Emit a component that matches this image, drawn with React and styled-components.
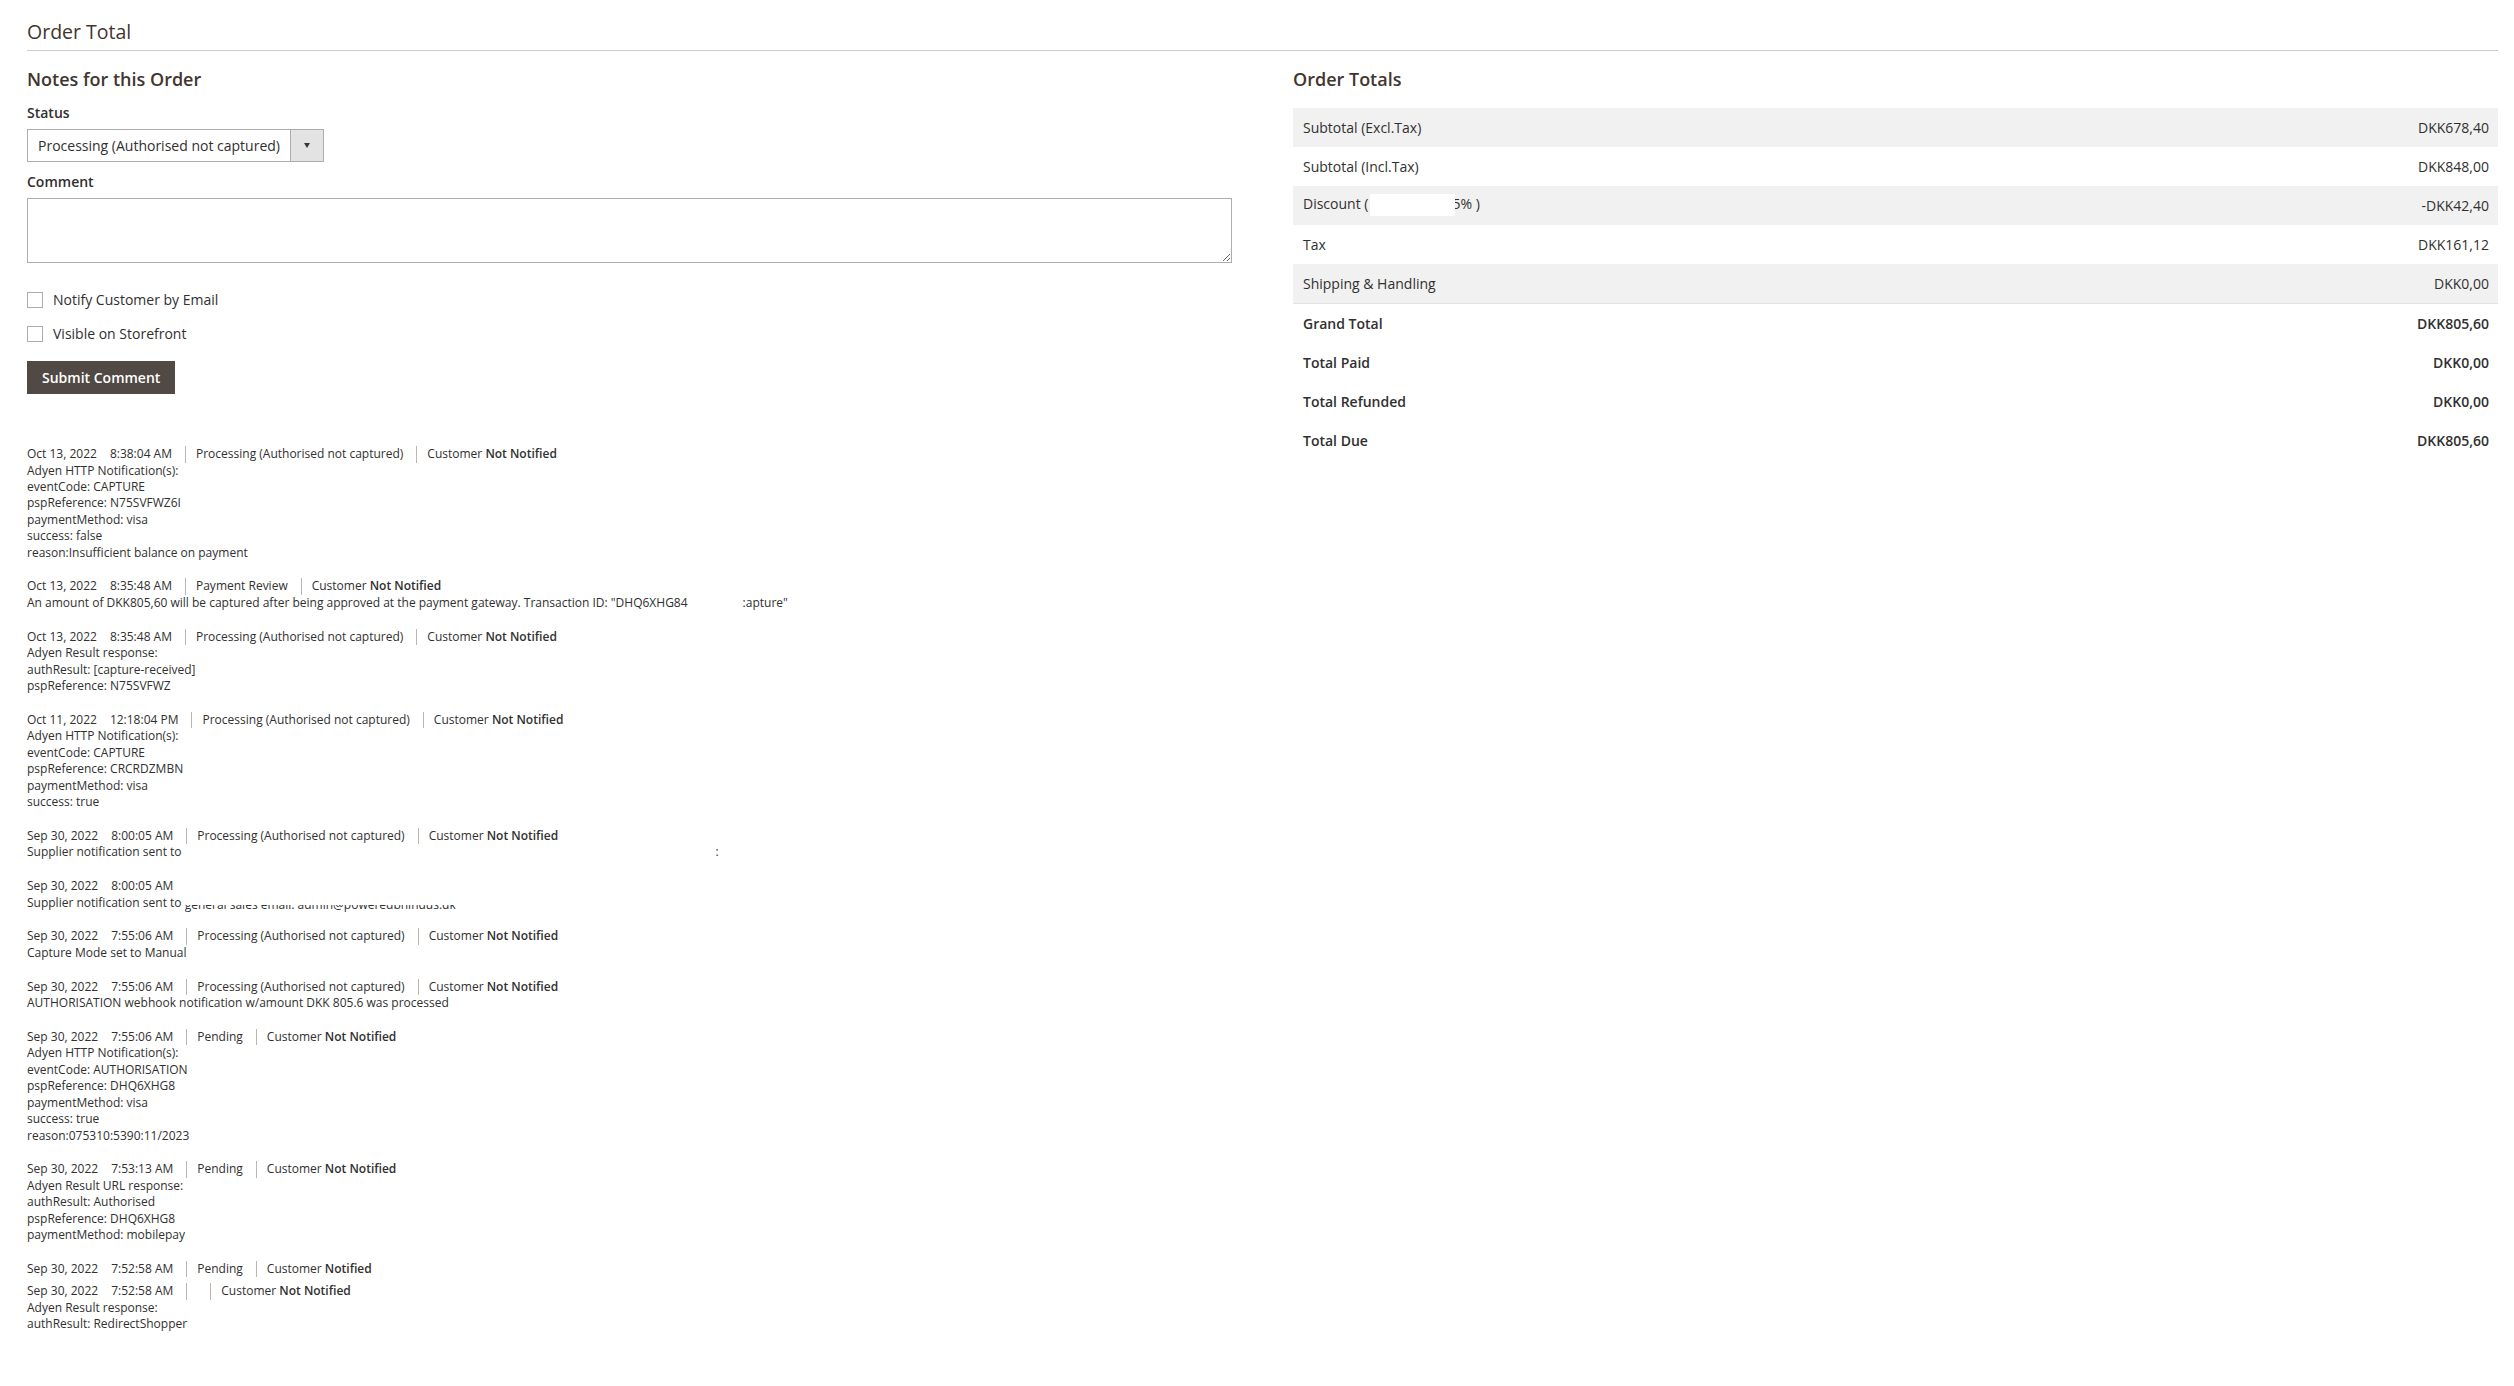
import React from "react";
import styled, { createGlobalStyle } from "styled-components";

const GlobalStyle = createGlobalStyle`
  body {
    margin: 0;
    background: #ffffff;
    font-family: "Open Sans", "Liberation Sans", sans-serif;
    color: #303030;
  }
`;

const NOT_CAPTURED = "Processing (Authorised not captured)";

const history = [
  {
    date: "Oct 13, 2022",
    time: "8:38:04 AM",
    status: NOT_CAPTURED,
    lines: [
      "Adyen HTTP Notification(s):",
      "eventCode: CAPTURE",
      "pspReference: N75SVFWZ6I",
      "paymentMethod: visa",
      "success: false",
      "reason:Insufficient balance on payment",
    ],
  },
  { date: "Oct 13, 2022", time: "8:35:48 AM", status: "Payment Review", kind: "transaction" },
  {
    date: "Oct 13, 2022",
    time: "8:35:48 AM",
    status: NOT_CAPTURED,
    lines: ["Adyen Result response:", "authResult: [capture-received]", "pspReference: N75SVFWZ"],
  },
  {
    date: "Oct 11, 2022",
    time: "12:18:04 PM",
    status: NOT_CAPTURED,
    lines: [
      "Adyen HTTP Notification(s):",
      "eventCode: CAPTURE",
      "pspReference: CRCRDZMBN",
      "paymentMethod: visa",
      "success: true",
    ],
  },
  { date: "Sep 30, 2022", time: "8:00:05 AM", status: NOT_CAPTURED, kind: "supplier" },
  { date: "Sep 30, 2022", time: "8:00:05 AM", bare: true, kind: "supplierClipped" },
  { date: "Sep 30, 2022", time: "7:55:06 AM", status: NOT_CAPTURED, lines: ["Capture Mode set to Manual"] },
  {
    date: "Sep 30, 2022",
    time: "7:55:06 AM",
    status: NOT_CAPTURED,
    lines: ["AUTHORISATION webhook notification w/amount DKK 805.6 was processed"],
  },
  {
    date: "Sep 30, 2022",
    time: "7:55:06 AM",
    status: "Pending",
    lines: [
      "Adyen HTTP Notification(s):",
      "eventCode: AUTHORISATION",
      "pspReference: DHQ6XHG8",
      "paymentMethod: visa",
      "success: true",
      "reason:075310:5390:11/2023",
    ],
  },
  {
    date: "Sep 30, 2022",
    time: "7:53:13 AM",
    status: "Pending",
    lines: [
      "Adyen Result URL response:",
      "authResult: Authorised",
      "pspReference: DHQ6XHG8",
      "paymentMethod: mobilepay",
    ],
  },
  { date: "Sep 30, 2022", time: "7:52:58 AM", status: "Pending", notified: true },
  {
    date: "Sep 30, 2022",
    time: "7:52:58 AM",
    status: "",
    lines: ["Adyen Result response:", "authResult: RedirectShopper"],
  },
];

const totals = [
  { label: "Subtotal (Excl.Tax)", value: "DKK678,40" },
  { label: "Subtotal (Incl.Tax)", value: "DKK848,00" },
  { label: "discount", value: "-DKK42,40" },
  { label: "Tax", value: "DKK161,12" },
  { label: "Shipping & Handling", value: "DKK0,00" },
];

const grandTotals = [
  { label: "Grand Total", value: "DKK805,60" },
  { label: "Total Paid", value: "DKK0,00" },
  { label: "Total Refunded", value: "DKK0,00" },
  { label: "Total Due", value: "DKK805,60" },
];

const renderComment = (item) => {
  if (item.kind === "transaction") {
    return (
      <CommentLine>
        An amount of DKK805,60 will be captured after being approved at the payment gateway.
        Transaction ID: "DHQ6XHG84
        <Gap $w={55} />
        :apture"
      </CommentLine>
    );
  }
  if (item.kind === "supplier") {
    return (
      <CommentLine>
        Supplier notification sent to
        <Gap $w={534} />:
      </CommentLine>
    );
  }
  if (item.kind === "supplierClipped") {
    return (
      <CommentLine>
        Supplier notification sent to{" "}
        <HalfHidden>general sales email: admin@poweredbhindus.dk</HalfHidden>
      </CommentLine>
    );
  }
  return item.lines.map((line, i) => <CommentLine key={i}>{line}</CommentLine>);
};

const App = () => {
  return (
    <Page>
      <GlobalStyle />
      <PageTitle>Order Total</PageTitle>
      <Columns>
        <div>
          <SectionTitle>Notes for this Order</SectionTitle>
          <FieldLabel $top={12}>Status</FieldLabel>
          <SelectBox>
            <SelectText>Processing (Authorised not captured)</SelectText>
            <SelectArrow>
              <Caret />
            </SelectArrow>
          </SelectBox>
          <FieldLabel $top={10}>Comment</FieldLabel>
          <CommentBox />
          <CheckRow $top={27.5}>
            <CheckBox />
            Notify Customer by Email
          </CheckRow>
          <CheckRow $top={14}>
            <CheckBox />
            Visible on Storefront
          </CheckRow>
          <SubmitButton>Submit Comment</SubmitButton>

          <HistoryList>
            {history.map((item, i) => (
              <HistoryItem key={i}>
                <HistoryHead>
                  <span>{item.date}</span>
                  <Time>{item.time}</Time>
                  {!item.bare && (
                    <>
                      <Divided>{item.status}</Divided>
                      <Divided>
                        Customer <b>{item.notified ? "Notified" : "Not Notified"}</b>
                      </Divided>
                    </>
                  )}
                </HistoryHead>
                {(item.lines || item.kind) && <Comment>{renderComment(item)}</Comment>}
              </HistoryItem>
            ))}
          </HistoryList>
        </div>

        <div>
          <SectionTitle>Order Totals</SectionTitle>
          <TotalsTable>
            {totals.map((row, i) => (
              <TotalRow key={row.label} $striped={i % 2 === 0}>
                {row.label === "discount" ? (
                  <span>
                    Discount (<Redacted />
                    <AfterRedacted>5% )</AfterRedacted>
                  </span>
                ) : (
                  <span>{row.label}</span>
                )}
                <span>{row.value}</span>
              </TotalRow>
            ))}
            <TotalsFoot>
              {grandTotals.map((row) => (
                <TotalRow key={row.label} $bold>
                  <span>{row.label}</span>
                  <span>{row.value}</span>
                </TotalRow>
              ))}
            </TotalsFoot>
          </TotalsTable>
        </div>
      </Columns>
    </Page>
  );
};

const Page = styled.div`
  padding: 20px 16px 40px 27px;
`;

const PageTitle = styled.h1`
  margin: 0;
  font-size: 19.5px;
  font-weight: 400;
  line-height: 24px;
  color: #41362f;
  padding-bottom: 6px;
  border-bottom: 1px solid #cccccc;
`;

const Columns = styled.div`
  display: grid;
  grid-template-columns: 1fr 1fr;
  column-gap: 61px;
  margin-top: 18px;
  align-items: start;
`;

const SectionTitle = styled.h3`
  margin: 0;
  font-size: 18px;
  font-weight: 600;
  line-height: 21.6px;
  color: #41362f;
`;

const FieldLabel = styled.div`
  margin-top: ${(p) => p.$top}px;
  font-size: 14px;
  font-weight: 600;
  line-height: 19px;
  color: #303030;
`;

const SelectBox = styled.div`
  margin-top: 7px;
  display: flex;
  width: 297px;
  height: 33px;
  box-sizing: border-box;
  border: 1px solid #adadad;
  font-size: 14px;
  color: #303030;
`;

const SelectText = styled.div`
  flex: 1;
  padding-left: 10px;
  line-height: 31px;
  white-space: nowrap;
`;

const SelectArrow = styled.div`
  width: 32px;
  border-left: 1px solid #adadad;
  background: #e3e3e3;
  display: flex;
  align-items: center;
  justify-content: center;
`;

const Caret = styled.span`
  width: 0;
  height: 0;
  border-left: 3.5px solid transparent;
  border-right: 3.5px solid transparent;
  border-top: 5px solid #41362f;
`;

const CommentBox = styled.textarea`
  display: block;
  margin-top: 7px;
  width: 100%;
  height: 65px;
  box-sizing: border-box;
  border: 1px solid #adadad;
  border-radius: 0;
  resize: vertical;
  outline: none;
`;

const CheckRow = styled.label`
  margin-top: ${(p) => p.$top}px;
  display: flex;
  align-items: center;
  gap: 10px;
  font-size: 14px;
  line-height: 20px;
  color: #303030;
`;

const CheckBox = styled.span`
  width: 16px;
  height: 16px;
  box-sizing: border-box;
  border: 1px solid #adadad;
  background: #ffffff;
`;

const SubmitButton = styled.button`
  display: block;
  margin-top: 17px;
  height: 33px;
  padding: 0 15px;
  border: none;
  background: #514943;
  color: #ffffff;
  font-family: inherit;
  font-size: 14px;
  font-weight: 600;
`;

const HistoryList = styled.div`
  margin-top: 52px;
  font-size: 12px;
  line-height: 16.4px;
  color: #303030;
`;

const HistoryItem = styled.div`
  margin-bottom: 6px;
`;

const HistoryHead = styled.div`
  white-space: nowrap;
  b {
    font-weight: 600;
  }
`;

const Time = styled.span`
  margin-left: 13px;
`;

const Divided = styled.span`
  display: inline-block;
  vertical-align: top;
  margin-left: 13px;
  padding-left: 10px;
  min-height: 16.4px;
  border-left: 1px solid #bdb6b0;
`;

const Comment = styled.div`
  padding-bottom: 11.5px;
`;

const CommentLine = styled.div`
  white-space: nowrap;
`;

const Gap = styled.span`
  display: inline-block;
  width: ${(p) => p.$w}px;
`;

const HalfHidden = styled.span`
  display: inline-block;
  clip-path: inset(52% 0 0 0);
  transform: translateY(2px);
`;

const TotalsTable = styled.div`
  margin-top: 17px;
  font-size: 14px;
  color: #303030;
`;

const TotalRow = styled.div`
  display: flex;
  justify-content: space-between;
  align-items: center;
  height: 39px;
  padding: 0 9px 0 10px;
  background: ${(p) => (p.$striped ? "#f1f1f1" : "transparent")};
  font-weight: ${(p) => (p.$bold ? 600 : 400)};
  white-space: nowrap;
`;

const TotalsFoot = styled.div`
  border-top: 1px solid #e3e3e3;
`;

const Redacted = styled.span`
  position: relative;
  z-index: 1;
  display: inline-block;
  vertical-align: middle;
  width: 85px;
  height: 22px;
  margin-left: 2px;
  background: #ffffff;
`;

const AfterRedacted = styled.span`
  margin-left: -3px;
`;

export default App;
